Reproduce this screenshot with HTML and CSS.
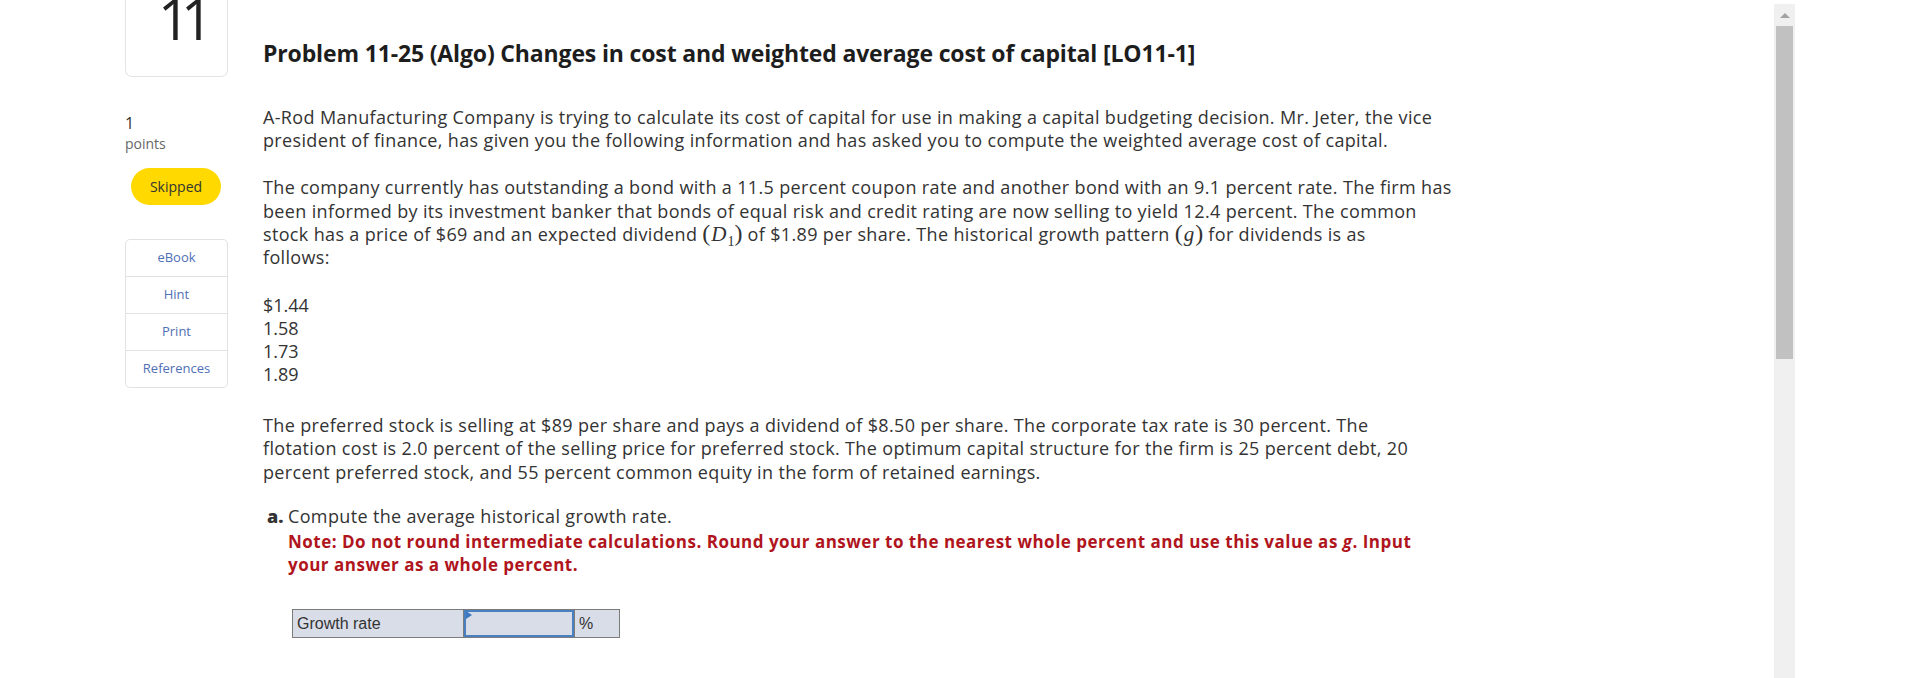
FILE: index.html
```html
<!DOCTYPE html>
<html lang="en">
<head>
<meta charset="utf-8">
<title>Problem 11-25</title>
<link rel="stylesheet" href="styles.css">
</head>
<body>
<div class="page">
  <div class="frame">
    <aside class="side">
      <div class="qnum">11</div>
      <div class="pts">
        <div class="pts-n">1</div>
        <div class="pts-l">points</div>
      </div>
      <div class="status">Skipped</div>
      <div class="tools">
        <div class="tool">eBook</div>
        <div class="tool">Hint</div>
        <div class="tool">Print</div>
        <div class="tool">References</div>
      </div>
    </aside>
    <main class="content">
      <h1 class="title">Problem 11-25 (Algo) Changes in cost and weighted average cost of capital [LO11-1]</h1>
      <p class="para">A-Rod Manufacturing Company is trying to calculate its cost of capital for use in making a capital budgeting decision. Mr. Jeter, the vice<br>president of finance, has given you the following information and has asked you to compute the weighted average cost of capital.</p>
      <p class="para">The company currently has outstanding a bond with a 11.5 percent coupon rate and another bond with an 9.1 percent rate. The firm has<br>been informed by its investment banker that bonds of equal risk and credit rating are now selling to yield 12.4 percent. The common<br>stock has a price of $69 and an expected dividend <span class="math"><span class="paren">(</span><i>D</i><sub>1</sub><span class="paren">)</span></span> of $1.89 per share. The historical growth pattern <span class="math"><span class="paren">(</span><i>g</i><span class="paren">)</span></span> for dividends is as<br>follows:</p>
      <div class="values">
        <div>$1.44</div>
        <div>1.58</div>
        <div>1.73</div>
        <div>1.89</div>
      </div>
      <p class="para">The preferred stock is selling at $89 per share and pays a dividend of $8.50 per share. The corporate tax rate is 30 percent. The<br>flotation cost is 2.0 percent of the selling price for preferred stock. The optimum capital structure for the firm is 25 percent debt, 20<br>percent preferred stock, and 55 percent common equity in the form of retained earnings.</p>
      <div class="part">
        <span class="part-label">a.</span>
        <div class="part-body">
          <div class="part-q">Compute the average historical growth rate.</div>
          <div class="note">Note: Do not round intermediate calculations. Round your answer to the nearest whole percent and use this value as <i>g</i>. Input<br>your answer as a whole percent.</div>
        </div>
      </div>
      <div class="answer">
        <div class="cell label">Growth rate</div>
        <div class="cell input"><span class="flag"></span></div>
        <div class="cell unit">%</div>
      </div>
    </main>
  </div>
  <div class="scrollbar">
    <div class="sb-up"></div>
    <div class="sb-thumb"></div>
  </div>
</div>
</body>
</html>
```

FILE: styles.css
```css
html, body {
  margin: 0;
  padding: 0;
  background: #ffffff;
}

.page {
  display: flex;
  height: 678px;
  overflow: hidden;
  font-family: "Open Sans", "Noto Sans", sans-serif;
  color: #333333;
}

.frame {
  flex: 0 0 1774px;
  display: flex;
  align-items: flex-start;
}

.side {
  flex: 0 0 103px;
  margin-left: 125px;
  display: flex;
  flex-direction: column;
}

.qnum {
  box-sizing: border-box;
  height: 117px;
  margin-top: -40px;
  padding-top: 30px;
  padding-left: 9px;
  border: 1px solid #e4e4e4;
  border-top: none;
  border-radius: 0 0 7px 7px;
  text-align: center;
  font-size: 56px;
  font-weight: 500;
  line-height: 1;
  color: #222222;
  letter-spacing: -9px;
}

.pts {
  margin-top: 36px;
}

.pts-n {
  font-size: 16px;
  line-height: 20px;
  color: #333333;
}

.pts-l {
  font-size: 14px;
  line-height: 22px;
  color: #666666;
}

.status {
  box-sizing: border-box;
  width: 90px;
  height: 37px;
  margin: 13px 0 0 6px;
  border-radius: 19px;
  background: #ffd900;
  color: #333333;
  font-size: 14px;
  line-height: 37px;
  text-align: center;
}

.tools {
  margin-top: 34px;
  border: 1px solid #e2e2e2;
  border-radius: 5px;
}

.tool {
  height: 36px;
  line-height: 34px;
  text-align: center;
  font-size: 13px;
  color: #4f6fb6;
  border-top: 1px solid #e2e2e2;
}

.tool:first-child {
  border-top: none;
}

.content {
  width: 1240px;
  margin-left: 35px;
}

.title {
  margin: 39px 0 0;
  font-size: 23px;
  line-height: 28px;
  font-weight: 700;
  color: #1d1d1d;
  letter-spacing: -0.15px;
}

.para {
  margin: 39px 0 0;
  font-size: 18px;
  line-height: 23.4px;
  letter-spacing: 0.35px;
}

.para + .values {
  margin-top: 24px;
}

.values + .para {
  margin-top: 28px;
}

.para + .para {
  margin-top: 23.4px;
}

.values {
  font-size: 18px;
  line-height: 23px;
}

.math {
  font-family: "Liberation Serif", "DejaVu Serif", serif;
  font-size: 21px;
  white-space: nowrap;
  letter-spacing: 0;
}

.math .paren {
  font-size: 24px;
  font-style: normal;
  line-height: 0;
}

.math i {
  margin: 0 1px;
}

.math sub {
  font-size: 14px;
  line-height: 0;
}

.part {
  display: flex;
  margin-top: 20.5px;
  margin-left: 4px;
  font-size: 18px;
  line-height: 23.4px;
  letter-spacing: 0.35px;
}

.part-label {
  flex: 0 0 21px;
  font-weight: 800;
  letter-spacing: 0;
}

.note {
  margin-top: 2px;
  font-size: 17px;
  line-height: 23px;
  font-weight: 700;
  color: #b0151d;
  letter-spacing: 0.5px;
}

.answer {
  display: flex;
  margin: 33px 0 0 29px;
  width: 328px;
  height: 29px;
  box-sizing: border-box;
  border: 1px solid #7b7b7b;
  background: #d9dde8;
  font-family: "Liberation Sans", Arial, sans-serif;
  font-size: 16px;
  color: #333333;
}

.cell {
  box-sizing: border-box;
  height: 27px;
  line-height: 27px;
}

.label {
  width: 171px;
  padding-left: 4px;
  border-right: 1px solid #7b7b7b;
}

.input {
  position: relative;
  width: 110px;
  border: 2px solid #4a7fc0;
}

.flag {
  position: absolute;
  left: 0;
  top: 0;
  width: 0;
  height: 0;
  border-top: 4px solid transparent;
  border-bottom: 4px solid transparent;
  border-left: 6px solid #3f78c2;
  margin-top: -1px;
}

.unit {
  flex: 1;
  padding-left: 4px;
  border-left: 1px solid #7b7b7b;
}

.scrollbar {
  flex: 0 0 21px;
  margin-top: 4px;
  height: 674px;
  background: #f0f0f0;
  display: flex;
  flex-direction: column;
  align-items: center;
}

.sb-up {
  margin-top: 9px;
  width: 0;
  height: 0;
  border-left: 5px solid transparent;
  border-right: 5px solid transparent;
  border-bottom: 5px solid #a3a3a3;
}

.sb-thumb {
  margin-top: 8px;
  width: 17px;
  height: 333px;
  background: #c1c1c1;
}
```
